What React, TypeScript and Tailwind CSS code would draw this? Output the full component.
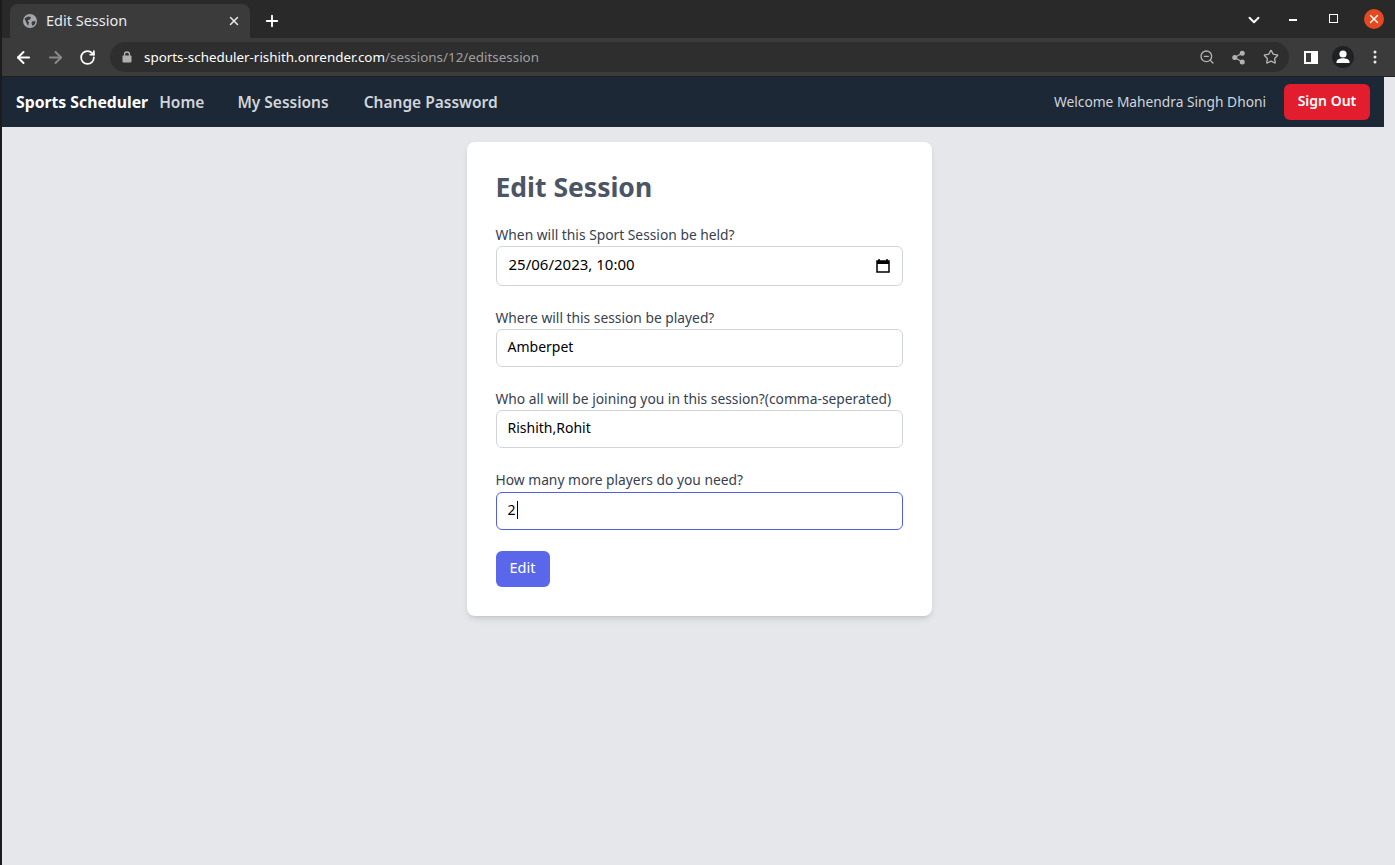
import { ArrowLeft, ArrowRight, RotateCw, Plus, X, ChevronDown, ZoomOut, Share2, Star } from 'lucide-react';

const fontClass = "font-['Noto_Sans','Open_Sans',sans-serif]";

function Field({ label, children, className, labelClass }: { label: string; children: React.ReactNode; className: string; labelClass?: string }) {
  return (
    <div className={className}>
      <label className={`block text-[13.8px] leading-[21px] text-[#374151] ${labelClass ?? ''}`}>{label}</label>
      {children}
    </div>
  );
}

function Input({ value, focused }: { value: string; focused?: boolean }) {
  return (
    <div
      className={`flex h-[38px] w-full items-center rounded-md border bg-white pb-[3px] pl-[11px] pr-[11px] text-[14px] text-black ${
        focused ? 'border-[#4f5fe8]' : 'border-[#d1d5db]'
      }`}
    >
      {value}
      {focused && <span className="ml-px h-[18px] w-px bg-black" />}
    </div>
  );
}

function GlobeIcon() {
  return (
    <svg width="14" height="14" viewBox="0 0 14 14">
      <circle cx="7" cy="7" r="7" fill="#a3a6aa" />
      <path d="M1.5 4.5 5 2.5l3 .5-1 2.5-2.5 1 1.5 2-1 3.5-1.5-3z" fill="#3b3b3b" />
      <path d="M9 7.5l3.5-.5-.5 3-2.5 2-1-2.5z" fill="#3b3b3b" />
    </svg>
  );
}

function LockIcon() {
  return (
    <svg width="10" height="12" viewBox="0 0 10 12">
      <path d="M2.5 5V3.5a2.5 2.5 0 0 1 5 0V5" fill="none" stroke="#b0b0b0" strokeWidth="1.3" />
      <rect x="0.5" y="4.5" width="9" height="7" rx="1" fill="#b0b0b0" />
    </svg>
  );
}

function AvatarIcon() {
  return (
    <svg width="22" height="22" viewBox="0 0 22 22">
      <circle cx="11" cy="11" r="11" fill="#202124" />
      <circle cx="11" cy="8" r="3.6" fill="#fff" />
      <path d="M4.5 17v-1.2c0-2.6 4-3.6 6.5-3.6s6.5 1 6.5 3.6V17z" fill="#fff" />
    </svg>
  );
}

function DotsIcon() {
  return (
    <svg width="4" height="14" viewBox="0 0 4 14">
      <circle cx="2" cy="2" r="1.5" fill="#e8eaed" />
      <circle cx="2" cy="7" r="1.5" fill="#e8eaed" />
      <circle cx="2" cy="12" r="1.5" fill="#e8eaed" />
    </svg>
  );
}

export default function App() {
  return (
    <div className={`flex min-h-screen flex-col border-l-2 border-[#1c1c1c] bg-[#e5e7eb] ${fontClass}`}>
      {/* browser chrome */}
      <div className="flex h-[38px] items-end bg-[#292929] pl-2">
        <div className="flex h-[34px] w-[240px] items-center rounded-t-lg bg-[#3b3b3b] pl-[13px] pr-[9px] text-[#e8eaed]">
          <GlobeIcon />
          <span className="ml-[9px] text-[14.5px]">Edit Session</span>
          <X size={14} strokeWidth={2.5} className="ml-auto" />
        </div>
        <Plus size={18} strokeWidth={2.5} className="mb-2 ml-[13px] text-white" />
        <div className="mb-[9px] ml-auto flex items-center text-white">
          <ChevronDown size={18} strokeWidth={2.5} className="mt-[2px] mr-[26px]" />
          <span className="mt-[2px] mr-[32px] h-[1.5px] w-2 bg-white" />
          <span className="-mt-[1px] mr-[26px] h-[9px] w-[9px] border-[1.5px] border-white" />
          <span className="mr-[11px] flex h-5 w-5 items-center justify-center rounded-full bg-[#e4491f]">
            <X size={14} strokeWidth={2.5} />
          </span>
        </div>
      </div>
      <div className="flex h-[39px] items-center border-b border-[#202020] bg-[#3b3b3b] text-white">
        <ArrowLeft size={19} strokeWidth={2.5} className="ml-[12px]" />
        <ArrowRight size={19} strokeWidth={2.5} className="ml-[13px] text-[#8a8a8a]" />
        <RotateCw size={17} strokeWidth={2.5} className="ml-[14px]" />
        <div className="ml-[14px] flex h-[30px] w-[1179px] items-center rounded-full bg-[#2e2e2e] pl-3 text-[13.4px]">
          <LockIcon />
          <span className="ml-[12px]">sports-scheduler-rishith.onrender.com</span>
          <span className="text-[#a0a0a0]">/sessions/12/editsession</span>
          <div className="ml-auto flex items-center text-[#b4b4b4]">
            <ZoomOut size={16} strokeWidth={2} className="mr-[16px]" />
            <Share2 size={15} strokeWidth={2} fill="currentColor" className="mr-[17px]" />
            <Star size={16} strokeWidth={2} className="mr-[10px]" />
          </div>
        </div>
        <span className="ml-[15px] h-[13px] w-[14px] border-[2px] border-r-[7px] border-white" />
        <span className="ml-[14px] flex">
          <AvatarIcon />
        </span>
        <span className="ml-[19px] flex">
          <DotsIcon />
        </span>
      </div>

      {/* page */}
      <div className="flex flex-1 flex-col">
        <nav className="mr-[11px] flex h-[50px] items-center bg-[#1c2836] px-[14px]">
          <span className="pt-[1px] text-[15.75px] font-bold text-white">Sports Scheduler</span>
          <a className="ml-[11px] pt-[1px] text-[15.5px] font-semibold text-[#d1d5db]">Home</a>
          <a className="ml-[33px] pt-[1px] text-[15.5px] font-semibold text-[#d1d5db]">My Sessions</a>
          <a className="ml-[35px] pt-[1px] text-[15.5px] font-semibold text-[#d1d5db]">Change Password</a>
          <span className="ml-auto text-[13.75px] text-[#d1d5db]">Welcome Mahendra Singh Dhoni</span>
          <button className="ml-[18px] h-9 w-[86px] rounded-md bg-[#e11d2e] pb-[3px] text-[14px] font-semibold text-white">Sign Out</button>
        </nav>

        <main className="flex justify-center pt-[15px] pl-[1px]">
          <div className="h-[474px] w-[465px] rounded-lg bg-white px-[29px] pt-[25px] shadow-md">
            <h1 className="text-[26.5px] leading-[40px] font-bold text-[#4b5563]">Edit Session</h1>
            <Field label="When will this Sport Session be held?" className="mt-[17px]">
              <div className="mt-px flex h-10 w-full items-center justify-between rounded-md border border-[#d1d5db] bg-white pb-[3px] pl-[12px] pr-[12px] text-[15px] text-black">
                25/06/2023, 10:00
                <svg width="14" height="14" viewBox="0 0 14 14" className="mt-[3px]">
                  <path d="M1 2h12v11H1z M3 0v2 M11 0v2" fill="none" stroke="#000" strokeWidth="1.5" />
                  <path d="M1 2h12v3H1z" fill="#000" />
                </svg>
              </div>
            </Field>
            <Field label="Where will this session be played?" className="mt-[21px]" labelClass="pb-[1px]">
              <Input value="Amberpet" />
            </Field>
            <Field label="Who all will be joining you in this session?(comma-seperated)" className="mt-[21px]" labelClass="pb-[1px]">
              <Input value="Rishith,Rohit" />
            </Field>
            <Field label="How many more players do you need?" className="mt-[21px]" labelClass="pb-[2px]">
              <Input value="2" focused />
            </Field>
            <button className="mt-[21px] h-9 w-[54px] rounded-md bg-[#5b67ea] pb-[3px] text-[14.5px] text-white">Edit</button>
          </div>
        </main>
      </div>
    </div>
  );
}
